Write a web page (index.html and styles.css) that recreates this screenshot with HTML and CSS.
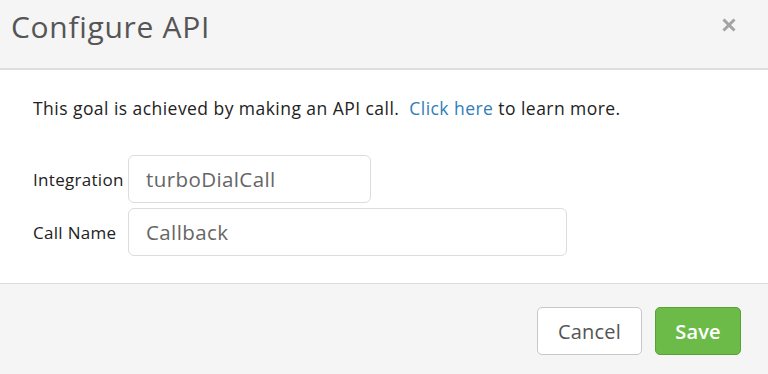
FILE: index.html
```html
<!DOCTYPE html>
<html>
<head>
<meta charset="utf-8">
<link rel="stylesheet" href="styles.css">
</head>
<body>
<div class="modal">
  <header class="head">
    <h1 class="title">Configure API</h1>
    <svg class="close" width="14" height="14" viewBox="0 0 14 14"><path d="M1.5 1.5L12.5 12.5M12.5 1.5L1.5 12.5" stroke="#a3a3a3" stroke-width="3"/></svg>
  </header>
  <section class="body">
    <p class="intro">This goal is achieved by making an API call.&nbsp; <a class="link" href="#">Click here</a> to learn more.</p>
    <div class="form">
      <div class="row">
        <label class="label">Integration</label>
        <div class="input short">turboDialCall</div>
      </div>
      <div class="row">
        <label class="label">Call Name</label>
        <div class="input long">Callback</div>
      </div>
    </div>
  </section>
  <footer class="foot">
    <button class="btn cancel">Cancel</button>
    <button class="btn save">Save</button>
  </footer>
</div>
</body>
</html>
```
FILE: styles.css
```css
html, body { margin: 0; padding: 0; }
body {
  width: 768px; height: 374px; overflow: hidden;
  font-family: "Open Sans", "Lato", sans-serif;
  background: #fff;
}
.modal { display: flex; flex-direction: column; height: 374px; }
.head {
  height: 68px; background: #f5f5f5;
  border-bottom: 2px solid #dedede;
  display: flex; align-items: center; justify-content: space-between;
  padding: 0 32px 0 11px; box-sizing: content-box;
}
.title { margin: -16px 0 0; font-weight: 400; font-size: 30px; color: #555; letter-spacing: 0.7px; }
.close { margin-top: -18px; }
.body { height: 213px; padding: 0 0 0 33px; }
.intro { margin: 26px 0 0; font-size: 17.5px; color: #222; line-height: 24px; letter-spacing: 0.45px; }
.link { color: #2f7dba; text-decoration: none; }
.form { margin-top: 35px; display: flex; flex-direction: column; gap: 5px; }
.row { display: flex; align-items: center; }
.label { width: 95px; font-size: 17px; color: #222; letter-spacing: 0.3px; }
.input {
  height: 48px; box-sizing: border-box; border: 1px solid #dcdcdc; border-radius: 6px;
  padding: 0 17px; display: flex; align-items: center; font-size: 20.5px; color: #666; letter-spacing: 0.4px;
}
.short { width: 243px; }
.long { width: 439px; }
.foot {
  flex: 1; background: #f5f5f5; border-top: 1px solid #dcdcdc;
  display: flex; justify-content: flex-end; align-items: flex-start;
  padding: 23px 27px 0 0; gap: 13px;
}
.btn {
  height: 48px; border-radius: 5px; font-family: inherit; font-size: 20px;
  padding: 0; cursor: pointer; letter-spacing: 0.2px;
}
.cancel { width: 105px; background: #fff; border: 1px solid #c8c8c8; color: #555; }
.save { width: 86px; background: #6cbb48; border: 1px solid #56a336; color: #fff; font-weight: 600; }
```
